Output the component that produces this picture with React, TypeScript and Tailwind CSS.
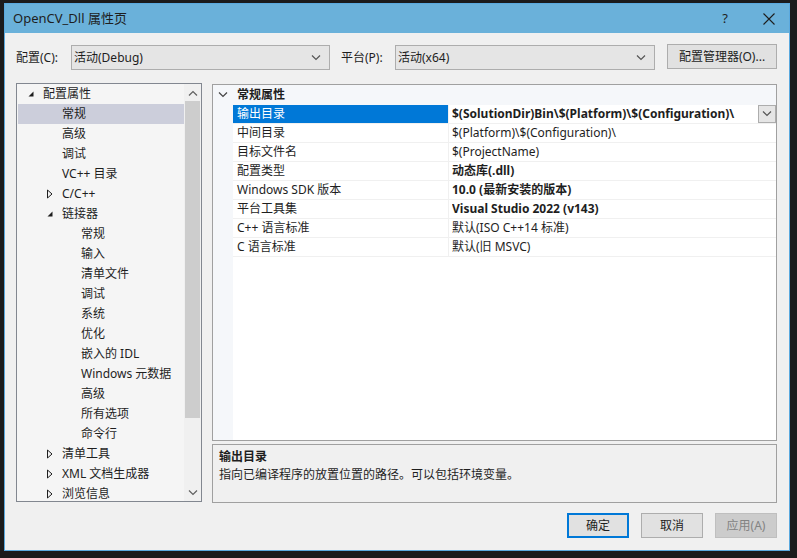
import React from 'react';

type TreeItem = { label: string; level: number; arrow?: 'open' | 'closed'; selected?: boolean };

const tree: TreeItem[] = [
  { label: '配置属性', level: 0, arrow: 'open' },
  { label: '常规', level: 1, selected: true },
  { label: '高级', level: 1 },
  { label: '调试', level: 1 },
  { label: 'VC++ 目录', level: 1 },
  { label: 'C/C++', level: 1, arrow: 'closed' },
  { label: '链接器', level: 1, arrow: 'open' },
  { label: '常规', level: 2 },
  { label: '输入', level: 2 },
  { label: '清单文件', level: 2 },
  { label: '调试', level: 2 },
  { label: '系统', level: 2 },
  { label: '优化', level: 2 },
  { label: '嵌入的 IDL', level: 2 },
  { label: 'Windows 元数据', level: 2 },
  { label: '高级', level: 2 },
  { label: '所有选项', level: 2 },
  { label: '命令行', level: 2 },
  { label: '清单工具', level: 1, arrow: 'closed' },
  { label: 'XML 文档生成器', level: 1, arrow: 'closed' },
  { label: '浏览信息', level: 1, arrow: 'closed' },
];

const props: { name: string; value: string; bold?: boolean }[] = [
  { name: '输出目录', value: '$(SolutionDir)Bin\\$(Platform)\\$(Configuration)\\', bold: true },
  { name: '中间目录', value: '$(Platform)\\$(Configuration)\\' },
  { name: '目标文件名', value: '$(ProjectName)' },
  { name: '配置类型', value: '动态库(.dll)', bold: true },
  { name: 'Windows SDK 版本', value: '10.0 (最新安装的版本)', bold: true },
  { name: '平台工具集', value: 'Visual Studio 2022 (v143)', bold: true },
  { name: 'C++ 语言标准', value: '默认(ISO C++14 标准)' },
  { name: 'C 语言标准', value: '默认(旧 MSVC)' },
];

const indent = ['pl-[9px]', 'pl-[28px]', 'pl-[47px]'];

function Chevron({ dir = 'down', className = '' }: { dir?: 'down' | 'up'; className?: string }) {
  return (
    <svg width="10" height="6" viewBox="0 0 10 6" className={className}>
      <path
        d={dir === 'down' ? 'M1 0.5 L5 4.5 L9 0.5' : 'M1 5.5 L5 1.5 L9 5.5'}
        fill="none"
        stroke="currentColor"
        strokeWidth="1.2"
      />
    </svg>
  );
}

function Arrow({ kind }: { kind: 'open' | 'closed' }) {
  if (kind === 'open') {
    return (
      <svg width="8" height="8" viewBox="0 0 8 8" className="w-[8px] shrink-0">
        <path d="M6.5 1.5 L6.5 6.5 L1.5 6.5 Z" fill="#1e1e1e" />
      </svg>
    );
  }
  return (
    <svg width="8" height="10" viewBox="0 0 8 10" className="w-[8px] shrink-0">
      <path d="M1.5 1 L6 5 L1.5 9 Z" fill="none" stroke="#1e1e1e" strokeWidth="1" />
    </svg>
  );
}

function Select({ value, width }: { value: string; width: string }) {
  return (
    <div className={`${width} h-[25px] flex items-center justify-between bg-[#e5e5e5] border border-[#adadad] pl-[2px] pr-[8px]`}>
      <span>{value}</span>
      <Chevron className="text-[#555]" />
    </div>
  );
}

export default function App() {
  return (
    <div
      className="w-[797px] h-[558px] bg-[#1b1b1c] pt-[3px] pl-[4px] text-[12px] text-[#1e1e1e]"
      style={{ fontFamily: '"Noto Sans", "Noto Sans CJK SC", sans-serif' }}
    >
      <div className="w-[786px] h-[548px] flex flex-col border border-[#5aa9df] bg-[#f0f0f0]">
        {/* Title bar */}
        <div className="h-[29px] bg-[#6ab1da] flex items-center pl-[8px] pr-[14px] text-[13px]">
          <span className="flex-1">OpenCV_Dll 属性页</span>
          <span className="w-[20px] text-center mr-[28px]">?</span>
          <svg width="12" height="12" viewBox="0 0 12 12">
            <path d="M0.5 0.5 L11.5 11.5 M11.5 0.5 L0.5 11.5" stroke="#1e1e1e" strokeWidth="1.1" />
          </svg>
        </div>

        <div className="flex-1 flex flex-col pl-[11px] pr-[12px] pt-[12px]">
          {/* Config row */}
          <div className="flex items-center h-[25px]">
            <span className="w-[55px]">配置(C):</span>
            <Select value="活动(Debug)" width="w-[259px]" />
            <span className="ml-[11px] w-[54px]">平台(P):</span>
            <Select value="活动(x64)" width="w-[260px]" />
            <div className="ml-[12px] w-[110px] h-[25px] -mt-[2px] flex items-center justify-center bg-[#e1e1e1] border border-[#adadad]">
              配置管理器(O)...
            </div>
          </div>

          {/* Main area */}
          <div className="flex mt-[13px] h-[420px]">
            {/* Tree */}
            <div className="w-[186px] h-[419px] border border-[#828790] bg-[#f5f5f5] flex overflow-hidden">
              <div className="flex-1 pl-[1px]">
                {tree.map((t, i) => (
                  <div
                    key={i}
                    className={`h-[20px] flex items-center whitespace-nowrap ${indent[t.level]} ${t.selected ? 'bg-[#cccedb]' : ''}`}
                  >
                    <span className="w-[16px] shrink-0 flex items-center">{t.arrow && <Arrow kind={t.arrow} />}</span>
                    <span>{t.label}</span>
                  </div>
                ))}
              </div>
              <div className="w-[17px] flex flex-col items-center bg-[#f0f0f0]">
                <div className="h-[17px] flex items-center justify-center text-[#606060]">
                  <Chevron dir="up" />
                </div>
                <div className="w-[15px] h-[317px] bg-[#cdcdcd]" />
                <div className="flex-1" />
                <div className="h-[17px] flex items-center justify-center text-[#606060]">
                  <Chevron />
                </div>
              </div>
            </div>

            {/* Right column */}
            <div className="ml-[10px] flex-1 flex flex-col mt-[1px]">
              <div className="h-[358px] border border-[#a0a0a0] bg-white flex">
                <div className="w-[20px] bg-[#f5f7fa] flex justify-center pt-[7px] text-[#444]">
                  <Chevron />
                </div>
                <div className="flex-1 flex flex-col">
                  <div className="h-[20px] bg-[#f5f7fa] flex items-center pl-[4px] font-bold">常规属性</div>
                  {props.map((p, i) => (
                    <div key={i} className="h-[19px] flex border-b border-[#f0f0f0]">
                      <div
                        className={`w-[216px] flex items-center pl-[4px] border-r border-[#f0f0f0] ${
                          i === 0 ? 'bg-[#0078d7] text-white' : ''
                        }`}
                      >
                        {p.name}
                      </div>
                      <div className={`flex-1 flex items-center pl-[3px] ${p.bold ? 'font-bold' : ''}`}>
                        <span className="flex-1 whitespace-nowrap overflow-hidden">{p.value}</span>
                        {i === 0 && (
                          <div className="w-[18px] h-[18px] bg-[#e5e5e5] border border-[#adadad] flex items-center justify-center text-[#555]">
                            <Chevron />
                          </div>
                        )}
                      </div>
                    </div>
                  ))}
                </div>
              </div>
              <div className="mt-[3px] h-[59px] border border-[#a0a0a0] bg-[#f0f0f0] px-[6px] pt-[3px] leading-[18px]">
                <div className="font-bold">输出目录</div>
                <div>指向已编译程序的放置位置的路径。可以包括环境变量。</div>
              </div>
            </div>
          </div>

          {/* Buttons */}
          <div className="flex justify-end gap-[12px] mt-[10px]">
            <div className="w-[62px] h-[25px] flex items-center justify-center bg-[#e1e1e1] border-2 border-[#0078d7]">确定</div>
            <div className="w-[62px] h-[25px] flex items-center justify-center bg-[#e1e1e1] border border-[#adadad]">取消</div>
            <div className="w-[62px] h-[25px] flex items-center justify-center bg-[#cccccc] border border-[#bfbfbf] text-[#838383]">
              应用(A)
            </div>
          </div>
        </div>
      </div>
    </div>
  );
}
